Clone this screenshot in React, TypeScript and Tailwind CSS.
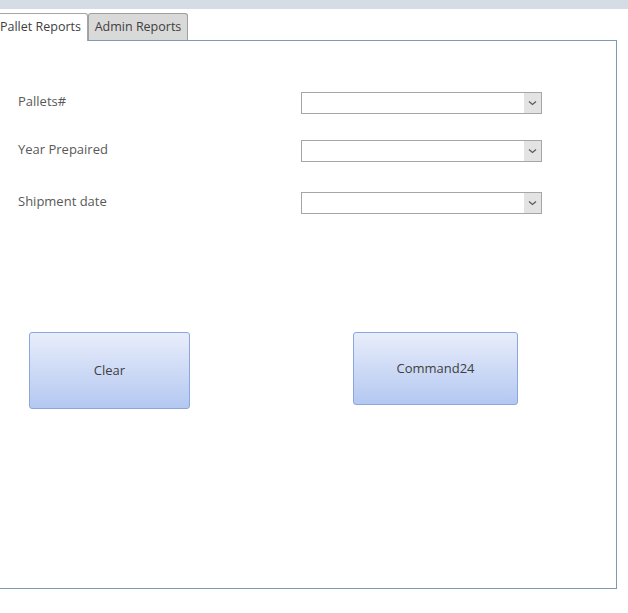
import React from "react";

const Combo = () => (
  <div className="flex h-[22px] w-[241px] border border-[#a6a6a6] bg-white">
    <div className="flex-1" />
    <div className="flex w-[17px] items-center justify-center bg-[#e3e3e3]">
      <svg width="9" height="6" viewBox="0 0 9 6" fill="none">
        <path d="M1 1.5 L4.5 4.5 L8 1.5" stroke="#555" strokeWidth="1.1" />
      </svg>
    </div>
  </div>
);

const Row = ({ label, mt }: { label: string; mt: string }) => (
  <div className={`flex items-start ${mt}`}>
    <div className="w-[301px] pl-[18px] pt-[1px] text-[13px] leading-[17px] text-[#595959]">{label}</div>
    <Combo />
  </div>
);

export default function App() {
  return (
    <div className="h-[613px] w-[628px] bg-white" style={{ fontFamily: '"Open Sans", "Noto Sans", sans-serif' }}>
      {/* top strip */}
      <div className="h-[9px] bg-[#d6dce5]" />

      {/* tab row */}
      <div className="relative z-10 flex h-[31px] items-end">
        <div className="-mb-px flex h-[28px] w-[88px] items-center rounded-tr-[3px] border-r border-t border-[#a5a5a5] bg-white text-[12.5px] text-[#404040]">
          Pallet Reports
        </div>
        <div className="flex h-[27px] w-[100px] items-center justify-center rounded-t-[3px] border border-b-0 border-[#a0a0a0] bg-[#d9d9d9] text-[12.5px] text-[#404040]">
          Admin Reports
        </div>
      </div>

      {/* panel */}
      <div className="-ml-px h-[549px] w-[618px] border border-[#7f98b6] bg-white">
        <Row label="Pallets#" mt="mt-[51px]" />
        <Row label="Year Prepaired" mt="mt-[26px]" />
        <Row label="Shipment date" mt="mt-[30px]" />

        <div className="mt-[118px] flex items-start">
          <button className="ml-[29px] flex h-[77px] w-[161px] items-center justify-center rounded-[3px] border border-[#8ba5dd] bg-gradient-to-b from-[#e8edfa] to-[#b4c8f1] text-[13px] text-[#404040]">
            Clear
          </button>
          <button className="ml-[163px] flex h-[73px] w-[165px] items-center justify-center rounded-[3px] border border-[#8ba5dd] bg-gradient-to-b from-[#e8edfa] to-[#b4c8f1] text-[13px] text-[#404040]">
            Command24
          </button>
        </div>
      </div>
    </div>
  );
}
